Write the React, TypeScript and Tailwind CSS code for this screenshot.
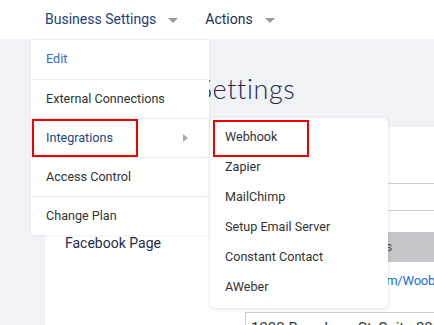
const mainItems = [
  { label: "Edit", tone: "text-[#2f6bd8]" },
  { label: "External Connections", tone: "text-[#333]" },
  { label: "Integrations", tone: "text-[#23468c]", active: true },
  { label: "Access Control", tone: "text-[#333]" },
  { label: "Change Plan", tone: "text-[#333]" },
];

const subItems = ["Webhook", "Zapier", "MailChimp", "Setup Email Server", "Constant Contact", "AWeber"];

const Caret = () => (
  <span className="ml-[12px] mt-[1px] inline-block h-0 w-0 border-x-[5px] border-t-[5px] border-x-transparent border-t-[#9a9a9a]" />
);

const App = () => {
  return (
    <div className="relative h-[325px] w-[434px] overflow-hidden bg-[#f1f2f6] font-['Roboto',sans-serif]">
      {/* top nav */}
      <nav className="flex h-[39px] items-center bg-white pl-[45px] text-[14px]">
        <span className="text-[#23407a]">Business Settings</span>
        <Caret />
        <span className="ml-[27px] text-[#23304f]">Actions</span>
        <Caret />
      </nav>

      <main className="pl-[45px]">
        <h1 className="flex h-[88px] items-center pl-[39px] pt-[13px] font-['Lato',sans-serif] text-[27px] font-light tracking-[0.6px] text-[#1f2b4d]">
          Business Settings
        </h1>

        <section className="grid grid-cols-[180px_1fr] bg-white pl-[20px] pt-[56px] text-[14px] text-[#1f2b4d]">
          <div />
          <div className="h-[28px] border border-[#cfcfcf]" />

          <div className="pt-[22px]">Facebook Page</div>
          <div className="pt-[21px]">
            <div className="flex h-[30px] items-center bg-[#c4c6ca] text-[13px] text-[#555]">
              Connect Facebook Pages
            </div>
            <div className="mt-[9px] whitespace-nowrap text-[13px] tracking-[-0.2px] text-[#1a6fd8]">
              https://www.facebook.com/Woobox
            </div>
          </div>

          <div className="pt-[38px] text-[15px]">Address</div>
          <div className="pt-[21px]">
            <div className="h-[32px] whitespace-nowrap border border-[#cfcfcf] pl-[5px] pt-[4px] text-[15px] text-[#333]">
              1320 Broadway St, Suite 201
            </div>
          </div>
        </section>
      </main>

      {/* business settings dropdown */}
      <ul className="absolute left-[31px] top-[39px] w-[178px] rounded-b-[4px] border-t border-[#ececec] bg-white text-[12.6px] shadow-[0_1px_3px_rgba(0,0,0,0.06)]">
        {mainItems.map((item, i) => (
          <li
            key={item.label}
            className={`relative flex h-[39px] items-center pl-[15px] ${item.tone} ${i > 0 ? "border-t border-[#ececec]" : ""}`}
          >
            {item.label}
            {item.active && (
              <>
                <span className="pointer-events-none absolute left-[1px] top-[0px] h-[38px] w-[106px] border-2 border-[#f20000]" />
                <span className="absolute left-[152px] top-[15px] h-0 w-0 border-y-[4px] border-l-[5px] border-y-transparent border-l-[#a8a8a8]" />
              </>
            )}
          </li>
        ))}
      </ul>

      {/* integrations submenu */}
      <ul className="absolute left-[210px] top-[118px] w-[178px] rounded-[5px] bg-white pb-[6px] pt-[4px] text-[12.6px] text-[#333] shadow-[0_1px_4px_rgba(0,0,0,0.12)]">
        {subItems.map((item, i) => (
          <li key={item} className="relative flex h-[30px] items-center pl-[15px]">
            {item}
            {i === 0 && (
              <span className="pointer-events-none absolute left-[3px] top-[-2px] h-[37px] w-[96px] border-2 border-[#f20000]" />
            )}
          </li>
        ))}
      </ul>
    </div>
  );
};

export default App;
